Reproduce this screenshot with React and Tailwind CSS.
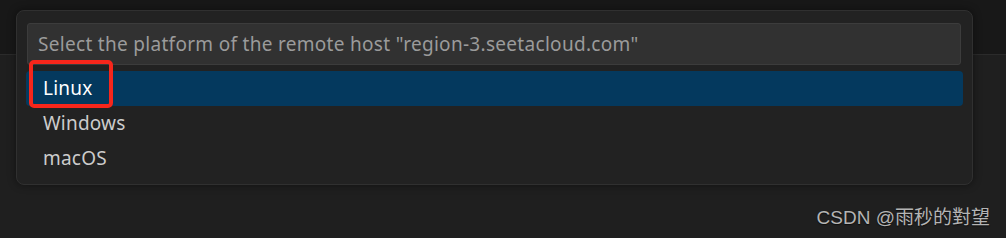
const options = ["Linux", "Windows", "macOS"];

const App = () => {
  const selected = 0;

  return (
    <div className="relative w-[1006px] h-[238px] overflow-hidden bg-[#1f1f1f] font-['Noto_Sans',sans-serif]">
      {/* editor title strip behind the quick pick */}
      <div className="h-[55px] bg-[#181818] border-b border-[#2b2b2b]" />

      {/* quick pick */}
      <div className="absolute left-[16px] top-[10px] w-[957px] h-[175px] rounded-[8px] border border-[#303030] bg-[#222222] shadow-[0_0_8px_rgba(0,0,0,0.45)] pl-[9px] pr-[9px] pt-[12px]">
        <div className="ml-[1px] mr-[2px] h-[42px] rounded-[3px] border border-[#3c3c3c] bg-[#313131] flex items-center px-[10px]">
          <span className="text-[19px] text-[#9b9b9b] tracking-[0.3px]">
            Select the platform of the remote host "region-3.seetacloud.com"
          </span>
        </div>

        <div className="mt-[6px] flex flex-col">
          {options.map((opt, index) => (
            <div
              key={opt}
              className={`h-[35px] flex items-center pl-[17px] rounded-[4px] text-[19px] tracking-[0.2px] ${
                index === selected ? "bg-[#04395e] text-white" : "text-[#cccccc]"
              }`}
            >
              {opt}
            </div>
          ))}
        </div>

        {/* red highlight box */}
        <div className="absolute left-[12px] top-[49px] w-[84px] h-[48px] rounded-[5px] border-[4px] border-[#f7261b]" />
      </div>

      {/* watermark */}
      <div className="absolute right-[16px] top-[204px] text-[19px] text-[#b4b4b4] font-['Liberation_Sans','Noto_Sans_CJK_SC',sans-serif] [text-shadow:0_1px_1px_rgba(0,0,0,0.6)]">
        CSDN @雨秒的對望
      </div>
    </div>
  );
};

export default App;
